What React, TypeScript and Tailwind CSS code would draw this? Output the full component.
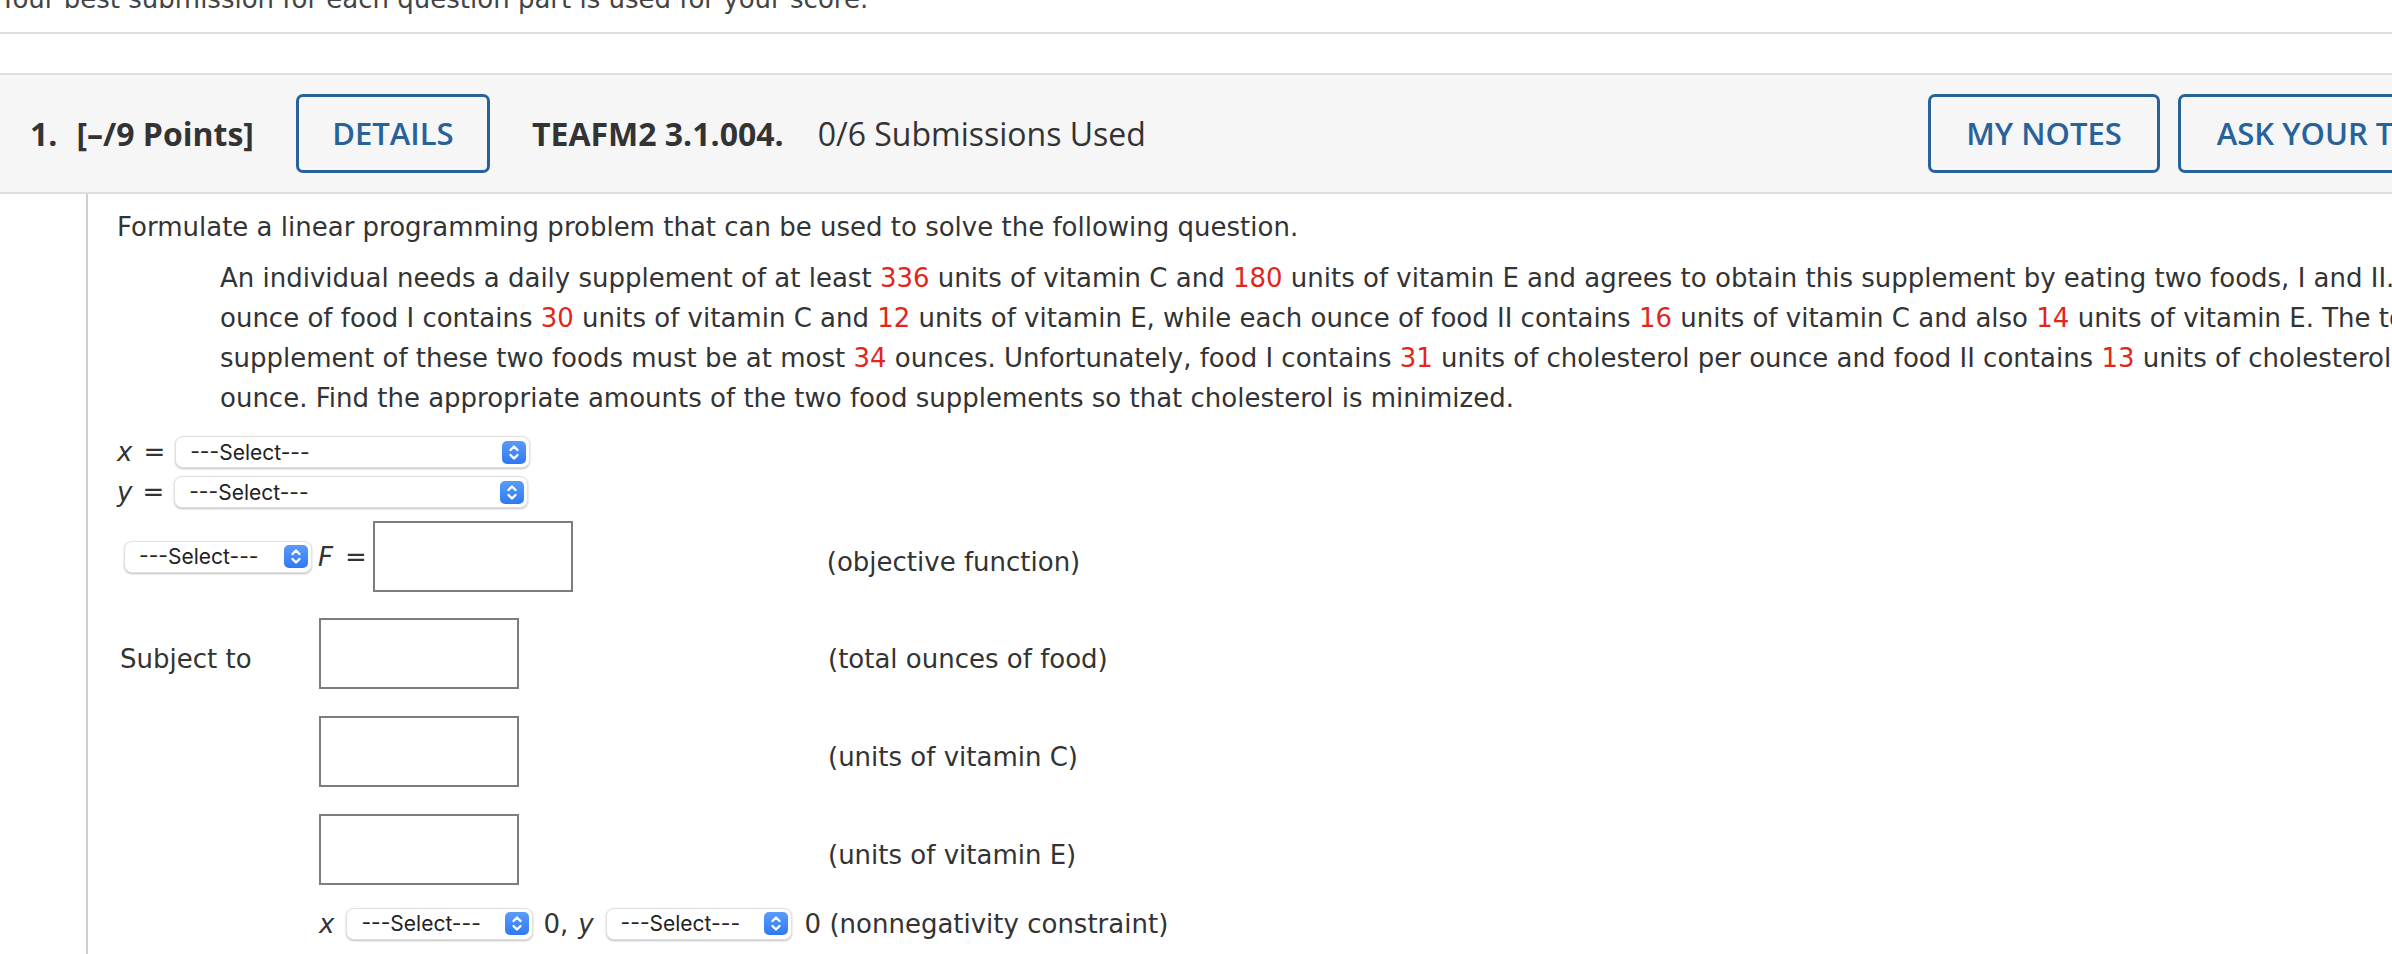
import React from 'react';

const body = "font-['DejaVu_Sans',Verdana,sans-serif]";
const head = "font-['Open_Sans',sans-serif]";

function Stepper() {
  return (
    <span className="flex h-[23px] w-[24px] shrink-0 items-center justify-center rounded-[5px] bg-gradient-to-b from-[#5a9cf9] to-[#2f78f4]">
      <svg viewBox="0 0 24 23" className="h-[23px] w-[24px]" fill="none" stroke="white" strokeWidth="2.4" strokeLinecap="round" strokeLinejoin="round">
        <path d="M8.5 9 12 5.5 15.5 9" />
        <path d="M8.5 14 12 17.5 15.5 14" />
      </svg>
    </span>
  );
}

function Select({ className }: { className: string }) {
  return (
    <div
      className={`flex h-[32px] shrink-0 items-center justify-between rounded-[8px] border border-[#e2e2e2] bg-white pl-[14px] pr-[3px] shadow-[0_1px_2px_rgba(0,0,0,0.25)] ${className}`}
    >
      <span className="font-['Inter',sans-serif] text-[21px] leading-none text-[#222]">---Select---</span>
      <Stepper />
    </div>
  );
}

function Box() {
  return <div className="h-[71px] w-[200px] shrink-0 border-2 border-[#7d7d7d] bg-white" />;
}

function Red({ children }: { children: React.ReactNode }) {
  return <span className="text-[#e3261c]">{children}</span>;
}

function OutlineButton({ label, className = '' }: { label: string; className?: string }) {
  return (
    <div
      className={`flex h-[79px] shrink-0 items-center justify-center rounded-[7px] border-[3px] border-[#27629a] text-[31px] font-semibold text-[#27629a] ${className}`}
    >
      {label}
    </div>
  );
}

export default function App() {
  return (
    <div className={`h-[954px] w-[2392px] overflow-hidden bg-white text-[#333] ${body}`}>
      <div className="w-[2580px]">
        {/* cut-off intro line */}
        <div className="h-[34px] overflow-hidden border-b-2 border-[#dedede]">
          <p className="-mt-[21px] whitespace-nowrap text-[26px] leading-[40px] text-[#444]">
            Your best submission for each question part is used for your score.
          </p>
        </div>
        <div className="h-[39px]" />

        {/* question header */}
        <div className={`flex h-[121px] items-center border-y-2 border-[#dedede] bg-[#f6f6f6] pl-[30px] pr-[30px] text-[32px] ${head}`}>
          <span className="font-bold">1.</span>
          <span className="ml-[19px] font-bold">[–/9 Points]</span>
          <OutlineButton label="DETAILS" className="ml-[42px] w-[194px]" />
          <span className="ml-[42px] font-bold">TEAFM2 3.1.004.</span>
          <span className="ml-[34px]">0/6 Submissions Used</span>
          <div className="ml-auto flex gap-[18px]">
            <OutlineButton label="MY NOTES" className="w-[232px]" />
            <OutlineButton label="ASK YOUR TEACHER" className="w-[372px]" />
          </div>
        </div>

        {/* question body */}
        <div className="ml-[86px] h-[760px] border-l-2 border-[#cfcfcf] pl-[29px] pt-[13px] text-[26px] leading-[40px]">
          <p className="whitespace-nowrap">Formulate a linear programming problem that can be used to solve the following question.</p>
          <div className="ml-[103px] mt-[11px] whitespace-nowrap">
            <p>
              An individual needs a daily supplement of at least <Red>336</Red> units of vitamin C and <Red>180</Red> units of vitamin E and agrees to obtain this supplement by eating two foods, I and II. Each
            </p>
            <p>
              ounce of food I contains <Red>30</Red> units of vitamin C and <Red>12</Red> units of vitamin E, while each ounce of food II contains <Red>16</Red> units of vitamin C and also <Red>14</Red> units of vitamin E. The total daily
            </p>
            <p>
              supplement of these two foods must be at most <Red>34</Red> ounces. Unfortunately, food I contains <Red>31</Red> units of cholesterol per ounce and food II contains <Red>13</Red> units of cholesterol per
            </p>
            <p>ounce. Find the appropriate amounts of the two food supplements so that cholesterol is minimized.</p>
          </div>

          <div className="mt-[18px] flex flex-col gap-[8px]">
            <div className="flex h-[32px] items-center">
              <span className="italic">x</span>
              <span className="ml-[11px]">=</span>
              <Select className="ml-[10px] w-[355px]" />
            </div>
            <div className="flex h-[32px] items-center">
              <span className="italic">y</span>
              <span className="ml-[10px]">=</span>
              <Select className="ml-[10px] w-[354px]" />
            </div>
          </div>

          <div className="mt-[13px] flex h-[71px] items-center">
            <Select className="ml-[7px] w-[188px]" />
            <span className="ml-[6px] italic">F</span>
            <span className="ml-[12px]">=</span>
            <div className="ml-[6px]">
              <Box />
            </div>
            <span className="ml-[254px] mt-[10px]">(objective function)</span>
          </div>

          <div className="mt-[26px] flex flex-col gap-[27px]">
            <div className="flex h-[71px] items-center">
              <span className="ml-[3px] mt-[10px] w-[199px]">Subject to</span>
              <Box />
              <span className="ml-[309px] mt-[10px]">(total ounces of food)</span>
            </div>
            <div className="flex h-[71px] items-center">
              <div className="ml-[202px]">
                <Box />
              </div>
              <span className="ml-[309px] mt-[10px]">(units of vitamin C)</span>
            </div>
            <div className="flex h-[71px] items-center">
              <div className="ml-[202px]">
                <Box />
              </div>
              <span className="ml-[309px] mt-[10px]">(units of vitamin E)</span>
            </div>
          </div>

          <div className="mt-[22px] flex h-[33px] items-center">
            <span className="ml-[202px] italic">x</span>
            <Select className="ml-[12px] w-[187px]" />
            <span className="ml-[10px]">0,</span>
            <span className="ml-[10px] italic">y</span>
            <Select className="ml-[12px] w-[186px]" />
            <span className="ml-[13px]">0 (nonnegativity constraint)</span>
          </div>
        </div>
      </div>
    </div>
  );
}
